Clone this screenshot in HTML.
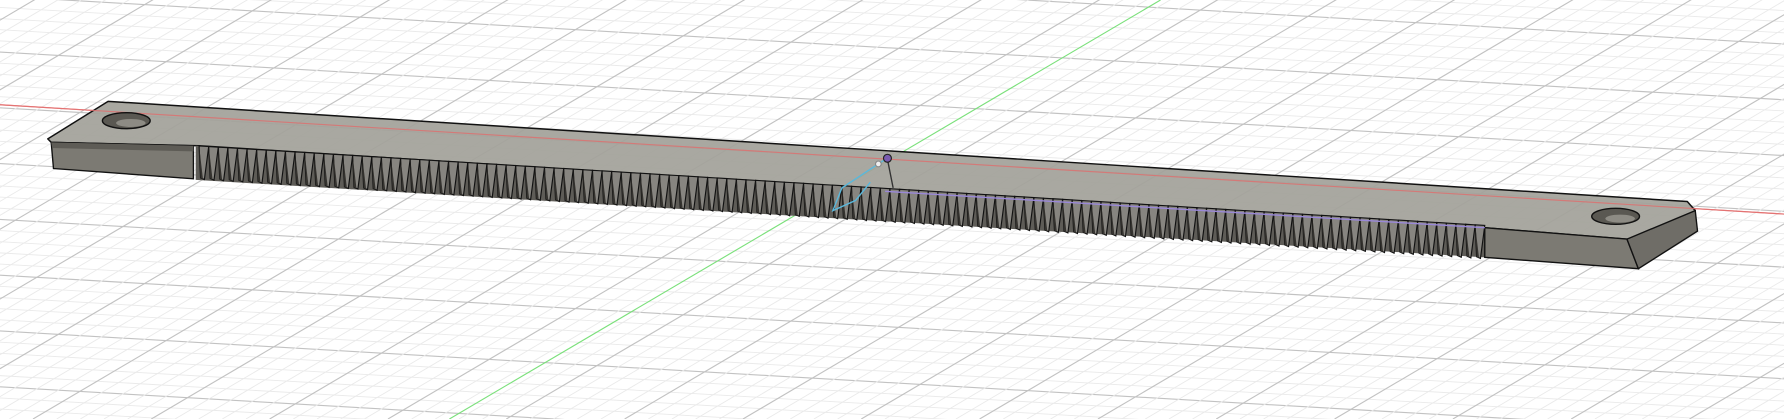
<!DOCTYPE html>
<html><head><meta charset="utf-8"><style>
html,body{margin:0;padding:0;background:#fff;overflow:hidden;width:1784px;height:419px}
svg{display:block}
</style></head><body>
<svg id="s" width="1784" height="419" viewBox="0 0 1568 368" preserveAspectRatio="none" xmlns="http://www.w3.org/2000/svg" style="overflow:hidden">
<rect width="1568" height="368" fill="#ffffff"/>
<g id="grid"></g>
<line x1="0" y1="92" x2="1568" y2="188" stroke="#f08080" stroke-width="1"/>
<line x1="395" y1="368" x2="1020" y2="0" stroke="#7be07b" stroke-width="1"/>
<polygon points="42,122 95,89 1483,177 1490,185 1440,210 1430,210 1305,200 175,128 45,125" fill="#a3a19a" fill-opacity="0.93" stroke="#111" stroke-width="1.3" stroke-linejoin="round"/>
<line x1="0" y1="92" x2="1568" y2="188" stroke="#e07070" stroke-width="1" opacity="0.8"/>
<ellipse cx="111" cy="106" rx="21" ry="7" fill="#5a5852" stroke="#111" stroke-width="1.2"/>
<ellipse cx="115" cy="108" rx="13" ry="3.5" fill="#8d8b84"/>
<ellipse cx="1420" cy="190" rx="21" ry="7" fill="#5a5852" stroke="#111" stroke-width="1.2"/>
<ellipse cx="1424" cy="192" rx="13" ry="3.5" fill="#8d8b84"/>
<polygon points="45,125 170,128 170,157 47,148" fill="#7c7a73" stroke="#111" stroke-width="1.2"/>
<polygon points="45,125 170,128 170,133 46,130" fill="#5e5c56"/>
<polygon id="band" points="172,128 1305,198 1305,226 172,158" fill="#5e5c57"/>
<g id="teeth"></g>
<polygon points="1305,200 1430,210 1440,236 1305,226" fill="#7c7a73" stroke="#111" stroke-width="1.2"/>
<polygon points="1430,210 1490,185 1492,203 1440,236" fill="#6f6d67" stroke="#111" stroke-width="1.2"/>
<polyline points="778,140 740,165 732,185 752,176 765,160" fill="none" stroke="#5ab8dc" stroke-width="1.2"/>
<line x1="780" y1="140" x2="785" y2="165" stroke="#333" stroke-width="1.2"/>
<line x1="778" y1="168" x2="1305" y2="200" stroke="#9a88d8" stroke-width="1.2"/>
<circle cx="780" cy="139" r="3.5" fill="#7a5bb0" stroke="#222"/>
<circle cx="772" cy="144" r="2.5" fill="#eee" stroke="#888"/>
</svg>
<script>
(function(){
var NS="http://www.w3.org/2000/svg";
var g=document.getElementById("grid");
function L(x1,y1,x2,y2,c,w){var l=document.createElementNS(NS,"line");l.setAttribute("x1",x1);l.setAttribute("y1",y1);l.setAttribute("x2",x2);l.setAttribute("y2",y2);l.setAttribute("stroke",c);l.setAttribute("stroke-width",w);g.appendChild(l);}
for(var i=-60;i<60;i++){var y=241.7+i*9.8;var major=(i%5==0);
 L(0,y,1568,y+1568*0.058,major?"#c2c2c2":"#eaeaea",major?1:0.8);}
for(var j=-30;j<120;j++){var x=29+j*20.8;var major=(j%5==0);
 L(x,368,x+625*1.2,368-368*1.2,major?"#c2c2c2":"#eaeaea",major?1:0.8);}
var t=document.getElementById("teeth");
var x0=175,x1=1305,n=134,p=(x1-x0)/n;
function ty(x){return 128+(x-172)*(70/1133);}
for(var k=0;k<n;k++){var a=x0+k*p,b=a+p;var ya=ty(a),yb=ty(b);
 var pl=document.createElementNS(NS,"polygon");
 pl.setAttribute("points",a+","+ya+" "+b+","+yb+" "+(a+p*0.55)+","+(yb+29)+" "+(a+p*0.15)+","+(ya+28));
 pl.setAttribute("fill","#878580");pl.setAttribute("stroke","#111");pl.setAttribute("stroke-width","1");t.appendChild(pl);
 var pd=document.createElementNS(NS,"polygon");
 pd.setAttribute("points",a+","+ya+" "+(a+p*0.15)+","+(ya+28)+" "+(a+p*0.4)+","+(ya+29));
 pd.setAttribute("fill","#35332f");t.appendChild(pd);}
})();
</script>
</body></html>
